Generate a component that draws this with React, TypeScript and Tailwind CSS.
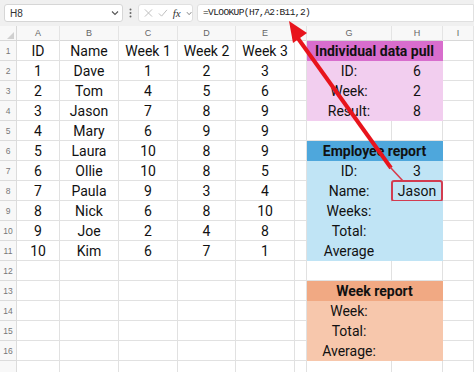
import React from 'react';

const cols = 'grid grid-cols-[17px_43px_59px_59px_58px_59px_12px_85px_51px_1fr]';

const people: (string | number)[][] = [
  [1, 'Dave', 1, 2, 3],
  [2, 'Tom', 4, 5, 6],
  [3, 'Jason', 7, 8, 9],
  [4, 'Mary', 6, 9, 9],
  [5, 'Laura', 10, 8, 9],
  [6, 'Ollie', 10, 8, 5],
  [7, 'Paula', 9, 3, 4],
  [8, 'Nick', 6, 8, 10],
  [9, 'Joe', 2, 4, 8],
  [10, 'Kim', 6, 7, 1],
];

type Side =
  | { kind: 'head'; text: string; bg: string }
  | { kind: 'body'; label: string; value?: string; bg: string; boxed?: boolean }
  | null;

const side: Side[] = [
  { kind: 'head', text: 'Individual data pull', bg: 'bg-[#d86dcd]' },
  { kind: 'body', label: 'ID:', value: '6', bg: 'bg-[#f2ceef]' },
  { kind: 'body', label: 'Week:', value: '2', bg: 'bg-[#f2ceef]' },
  { kind: 'body', label: 'Result:', value: '8', bg: 'bg-[#f2ceef]' },
  null,
  { kind: 'head', text: 'Employee report', bg: 'bg-[#4ea7dc]' },
  { kind: 'body', label: 'ID:', value: '3', bg: 'bg-[#c0e4f5]' },
  { kind: 'body', label: 'Name:', value: 'Jason', bg: 'bg-[#c0e4f5]', boxed: true },
  { kind: 'body', label: 'Weeks:', bg: 'bg-[#c0e4f5]' },
  { kind: 'body', label: 'Total:', bg: 'bg-[#c0e4f5]' },
  { kind: 'body', label: 'Average', bg: 'bg-[#c0e4f5]' },
  null,
  { kind: 'head', text: 'Week report', bg: 'bg-[#f1a983]' },
  { kind: 'body', label: 'Week:', bg: 'bg-[#f7c7ac]' },
  { kind: 'body', label: 'Total:', bg: 'bg-[#f7c7ac]' },
  { kind: 'body', label: 'Average:', bg: 'bg-[#f7c7ac]' },
  null,
];

const cell = 'h-[20px] leading-[20px] text-center border-r border-b border-[#e1e1e1] whitespace-nowrap';
const filled = 'h-[20px] leading-[20px] text-center border-r border-b border-transparent whitespace-nowrap';

const FormulaBar = () => (
  <div className="h-[26px] bg-[#f0f0f0] flex items-center pl-[4px] text-[#333]">
    <div className="w-[119px] h-[18px] bg-white border border-[#d6d6d6] rounded-[3px] flex items-center justify-between pl-[5px] pr-[3px]">
      <span className="text-[10px] font-['Liberation_Sans',sans-serif]">H8</span>
      <svg width="8" height="6" viewBox="0 0 8 6">
        <path d="M1 1.5 L4 4.5 L7 1.5" fill="none" stroke="#555" strokeWidth="1.1" />
      </svg>
    </div>
    <div className="w-[15px] flex justify-center">
      <svg width="3" height="10" viewBox="0 0 3 10">
        <circle cx="1.5" cy="1.5" r="1" fill="#666" />
        <circle cx="1.5" cy="5" r="1" fill="#666" />
        <circle cx="1.5" cy="8.5" r="1" fill="#666" />
      </svg>
    </div>
    <div className="w-[55px] h-[18px] bg-white border border-[#e0e0e0] rounded-[3px] flex items-center pl-[5px] gap-[5px]">
      <svg width="10" height="10" viewBox="0 0 10 10">
        <path d="M1 1 L9 9 M9 1 L1 9" stroke="#bdbdbd" strokeWidth="1.1" />
      </svg>
      <svg width="11" height="10" viewBox="0 0 11 10">
        <path d="M1 5.5 L4 8.5 L10 1.5" fill="none" stroke="#bdbdbd" strokeWidth="1.1" />
      </svg>
      <span className="text-[11px] italic font-['Liberation_Serif',serif] text-[#333] leading-none">fx</span>
      <svg width="7" height="5" viewBox="0 0 7 5">
        <path d="M1 1 L3.5 3.8 L6 1" fill="none" stroke="#777" strokeWidth="1" />
      </svg>
    </div>
    <div className="flex-1 ml-[4px] h-[18px] bg-white border border-[#e0e0e0] rounded-l-[3px] flex items-center pl-[5px]">
      <span className="text-[9.5px] tracking-[-0.6px] font-['Liberation_Mono',monospace] text-[#222]">
        =VLOOKUP(H7,A2:B11,2)
      </span>
    </div>
  </div>
);

const Arrow = () => (
  <svg className="absolute inset-0 pointer-events-none" width="474" height="372" viewBox="0 0 474 372">
    <line x1="297" y1="37" x2="391" y2="168" stroke="#e8141c" strokeWidth="4" />
    <line x1="390" y1="167" x2="403" y2="181" stroke="#d83a4c" strokeWidth="1.6" />
    <polygon points="289,21 293,43 307,33" fill="#e8141c" />
  </svg>
);

export default function App() {
  const letters = ['A', 'B', 'C', 'D', 'E', '', 'G', 'H', 'I'];
  return (
    <div className="relative w-[474px] h-[372px] overflow-hidden bg-white font-['Roboto',sans-serif] text-[14px] text-[#111]">
      <FormulaBar />
      <div className={`${cols} h-[15px] bg-[#f8f8f8] border-b border-[#d8d8d8]`}>
        <div className="border-r border-[#d8d8d8] relative">
          <svg className="absolute right-[2px] bottom-[2px]" width="7" height="7" viewBox="0 0 7 7">
            <path d="M7 0 L7 7 L0 7 Z" fill="#d0d0d0" />
          </svg>
        </div>
        {letters.map((l, i) => (
          <div
            key={i}
            className="border-r border-[#e4e4e4] text-center text-[9px] leading-[15px] text-[#666] font-['Liberation_Sans',sans-serif]"
          >
            {l}
          </div>
        ))}
      </div>
      {side.map((s, idx) => {
        const r = idx + 1;
        const rowVals: (string | number)[] =
          r === 1 ? ['ID', 'Name', 'Week 1', 'Week 2', 'Week 3'] : r <= 11 ? people[r - 2] : ['', '', '', '', ''];
        return (
          <div key={r} className={cols}>
            <div className="h-[20px] leading-[20px] bg-[#f8f8f8] border-r border-b border-[#dcdcdc] text-center text-[8.5px] text-[#777] font-['Liberation_Sans',sans-serif]">
              {r < 17 ? r : ''}
            </div>
            {rowVals.map((v, i) => (
              <div key={i} className={cell}>
                {v}
              </div>
            ))}
            <div className={cell} />
            {s === null && (
              <>
                <div className={cell} />
                <div className={cell} />
              </>
            )}
            {s && s.kind === 'head' && (
              <div className={`${filled} ${s.bg} col-span-2 font-bold`}>{s.text}</div>
            )}
            {s && s.kind === 'body' && (
              <>
                <div className={`${filled} ${s.bg}`}>{s.label}</div>
                <div className={`${filled} ${s.bg} relative`}>
                  {s.value}
                  {s.boxed && (
                    <div className="absolute -left-px -top-[1px] -right-px -bottom-[2px] rounded-[3px] border-2 border-[#d23c50]" />
                  )}
                </div>
              </>
            )}
            <div className={cell} />
          </div>
        );
      })}
      <Arrow />
    </div>
  );
}
